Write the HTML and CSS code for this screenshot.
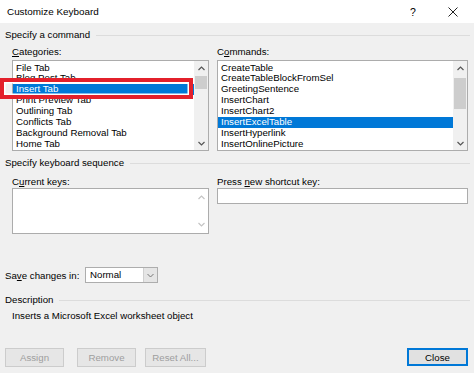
FILE: index.html
```html
<!DOCTYPE html>
<html lang="en">
<head>
  <meta charset="UTF-8" />
  <title>Customize Keyboard</title>
  <link rel="stylesheet" href="styles.css">
</head>
<body>
  <div class="dialog">
    <div class="titlebar">
      <span class="title">Customize Keyboard</span>
      <span class="help">?</span>
      <span class="close">
        <svg width="10" height="10" viewBox="0 0 10 10"><path d="M0.5 0.5L9.5 9.5M9.5 0.5L0.5 9.5" stroke="#222" stroke-width="1" fill="none"/></svg>
      </span>
    </div>

    <div class="content">
      <div class="group-head"><span>Specify a command</span></div>
      <div class="cols">
        <div class="col col-left">
          <div class="label"><u>C</u>ategories:</div>
          <div class="listbox">
            <ul class="items">
              <li>File Tab</li>
              <li>Blog Post Tab</li>
              <li class="selected">Insert Tab</li>
              <li>Print Preview Tab</li>
              <li>Outlining Tab</li>
              <li>Conflicts Tab</li>
              <li>Background Removal Tab</li>
              <li>Home Tab</li>
            </ul>
            <div class="scrollbar">
              <span class="arrow"><svg width="7" height="5" viewBox="0 0 7 5"><path d="M0.5 4L3.5 1L6.5 4" stroke="#555" stroke-width="1.2" fill="none"/></svg></span>
              <span class="track"><span class="thumb thumb-cat"></span></span>
              <span class="arrow"><svg width="7" height="5" viewBox="0 0 7 5"><path d="M0.5 1L3.5 4L6.5 1" stroke="#555" stroke-width="1.2" fill="none"/></svg></span>
            </div>
          </div>
        </div>
        <div class="col col-right">
          <div class="label">C<u>o</u>mmands:</div>
          <div class="listbox">
            <ul class="items">
              <li>CreateTable</li>
              <li>CreateTableBlockFromSel</li>
              <li>GreetingSentence</li>
              <li>InsertChart</li>
              <li>InsertChart2</li>
              <li class="selected">InsertExcelTable</li>
              <li>InsertHyperlink</li>
              <li>InsertOnlinePicture</li>
            </ul>
            <div class="scrollbar">
              <span class="arrow"><svg width="7" height="5" viewBox="0 0 7 5"><path d="M0.5 4L3.5 1L6.5 4" stroke="#555" stroke-width="1.2" fill="none"/></svg></span>
              <span class="track"><span class="thumb thumb-cmd"></span></span>
              <span class="arrow"><svg width="7" height="5" viewBox="0 0 7 5"><path d="M0.5 1L3.5 4L6.5 1" stroke="#555" stroke-width="1.2" fill="none"/></svg></span>
            </div>
          </div>
        </div>
      </div>

      <div class="group-head head-keys"><span>Specify keyboard sequence</span></div>
      <div class="cols">
        <div class="col col-left">
          <div class="label label-keys">C<u>u</u>rrent keys:</div>
          <div class="keysbox">
            <div class="keys-scroll">
              <svg width="7" height="5" viewBox="0 0 7 5"><path d="M0.5 4L3.5 1L6.5 4" stroke="#c4c4c4" stroke-width="1.2" fill="none"/></svg>
              <svg width="7" height="5" viewBox="0 0 7 5"><path d="M0.5 1L3.5 4L6.5 1" stroke="#c4c4c4" stroke-width="1.2" fill="none"/></svg>
            </div>
          </div>
        </div>
        <div class="col col-right">
          <div class="label label-keys">Press <u>n</u>ew shortcut key:</div>
          <div class="textbox"></div>
        </div>
      </div>

      <div class="save-row">
        <span class="save-label">Sa<u>v</u>e changes in:</span>
        <div class="select">
          <span class="select-value">Normal</span>
          <span class="select-btn"><svg width="7" height="5" viewBox="0 0 7 5"><path d="M0.5 1L3.5 4L6.5 1" stroke="#777" stroke-width="1" fill="none"/></svg></span>
        </div>
      </div>

      <div class="group-head head-desc"><span>Description</span></div>
      <div class="desc">Inserts a Microsoft Excel worksheet object</div>

      <div class="buttons">
        <button class="btn btn-assign" disabled>Assign</button>
        <button class="btn btn-remove" disabled>Remove</button>
        <button class="btn btn-reset" disabled>Reset All...</button>
        <button class="btn btn-close">Close</button>
      </div>
    </div>

    <div class="annotation"></div>
  </div>
</body>
</html>
```

FILE: styles.css
```css
body {
  margin: 0;
  font-family: "Liberation Sans", Arial, sans-serif;
  font-size: 9.7px;
  color: #000;
  background: #f0f0f0;
}
.dialog {
  position: relative;
  width: 474px;
  height: 373px;
  background: #f0f0f0;
  overflow: hidden;
}
.titlebar {
  height: 23px;
  background: #fff;
  display: flex;
  align-items: center;
  padding-left: 7px;
  font-size: 9.9px;
}
.title {
  flex: 1;
}
.help {
  width: 10px;
  margin-right: 28px;
  font-size: 10.5px;
}
.close {
  display: flex;
  margin-right: 16px;
}
.content {
  padding: 0 4px 0 5px;
}
.group-head {
  display: flex;
  align-items: center;
  height: 12px;
  line-height: 12px;
  margin-top: 6px;
}
.group-head::after {
  content: "";
  flex: 1;
  border-top: 1px solid #dcdcdc;
  margin-left: 6px;
}
.cols {
  display: flex;
  gap: 8px;
  padding: 0 2px 0 7px;
}
.col-left {
  width: 197px;
}
.col-right {
  width: 251px;
}
.label {
  height: 12px;
  line-height: 12px;
  margin-top: 5px;
  margin-bottom: 2px;
}
.listbox {
  display: flex;
  height: 91px;
  box-sizing: border-box;
  border: 1px solid #acacac;
  background: #fff;
}
.items {
  list-style: none;
  margin: 0;
  padding: 1.5px 0 0 0;
  flex: 1;
  overflow: hidden;
}
.items li {
  height: 10.86px;
  line-height: 10.86px;
  padding-left: 3px;
  white-space: nowrap;
}
.items li.selected {
  background: #0078d7;
  color: #fff;
}
.scrollbar {
  width: 14px;
  background: #f0f0f0;
  display: flex;
  flex-direction: column;
  align-items: center;
}
.scrollbar .arrow {
  height: 14px;
  display: flex;
  align-items: center;
}
.scrollbar .track {
  flex: 1;
  width: 100%;
  position: relative;
}
.thumb {
  position: absolute;
  left: 1px;
  right: 1px;
  background: #cdcdcd;
}
.thumb-cat {
  top: 1px;
  height: 13px;
}
.thumb-cmd {
  top: 3px;
  height: 31px;
}
.head-keys {
  margin-top: 6px;
}
.label-keys {
  margin-top: 7px;
  margin-bottom: 0;
}
.keysbox {
  height: 46px;
  box-sizing: border-box;
  border: 1px solid #acacac;
  background: #fff;
  display: flex;
  justify-content: flex-end;
}
.keys-scroll {
  width: 14px;
  display: flex;
  flex-direction: column;
  justify-content: space-between;
  align-items: center;
  padding: 6px 0 6px;
}
.textbox {
  height: 16px;
  box-sizing: border-box;
  border: 1px solid #acacac;
  background: #fff;
}
.save-row {
  display: flex;
  align-items: center;
  margin-top: 33px;
  height: 16px;
}
.save-label {
  width: 80px;
}
.select {
  display: flex;
  width: 73px;
  height: 16px;
  box-sizing: border-box;
  border: 1px solid #adadad;
  background: #fff;
}
.select-value {
  flex: 1;
  padding-left: 4px;
  line-height: 14px;
}
.select-btn {
  width: 13px;
  background: #e5e5e5;
  border-left: 1px solid #d0d0d0;
  display: flex;
  align-items: center;
  justify-content: center;
}
.head-desc {
  margin-top: 11px;
}
.desc {
  margin-top: 4px;
  height: 12px;
  line-height: 12px;
  padding-left: 7px;
}
.buttons {
  display: flex;
  gap: 13px;
  margin-top: 26px;
}
.btn {
  font-family: inherit;
  font-size: 9.7px;
  height: 19px;
  width: 59px;
  padding: 0;
  border: 1px solid #cccccc;
  background: #e6e6e6;
  color: #9e9e9e;
}
.btn-reset {
  margin-left: -4px;
  width: 61px;
}
.btn-close {
  margin-left: auto;
  margin-right: 2px;
  width: 61px;
  height: 18px;
  color: #000;
  background: #e1e1e1;
  border: 2px solid #0078d7;
}
.annotation {
  position: absolute;
  left: 0;
  top: 78px;
  width: 193px;
  height: 21px;
  box-sizing: border-box;
  border: 4px solid #e3202b;
  box-shadow: inset 0 0 0 1.5px #fff;
}
```
